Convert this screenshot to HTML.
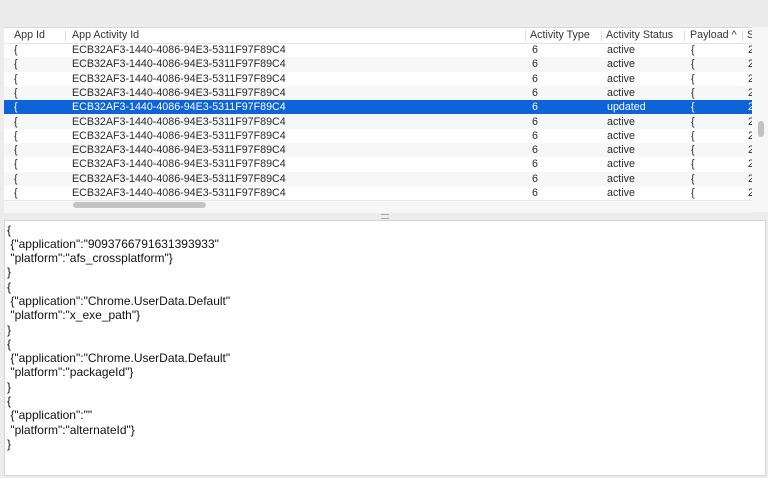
<!DOCTYPE html>
<html><head><style>
body{margin:0;width:768px;height:478px;background:#ececec;font-family:"Liberation Sans",sans-serif;overflow:hidden;position:relative}
.tbl{position:absolute;left:4px;top:27px;width:748px;height:185px;background:#fff;border-top:1px solid #d8d8d8;overflow:hidden}
.row{position:absolute;left:0;width:748px;height:14.3px;font-size:10.7px;color:#2a2a2a;line-height:14.3px}
.row.alt{background:#f6f7f7}
.row.sel{background:#0d63d8;color:#fff}
.row span{position:absolute;top:0;white-space:nowrap}
.hdr{top:0;height:15px;line-height:15px;color:#333;border-bottom:1px solid #e4e4e4}
.sep{position:absolute;top:2px;width:1px;height:11px;background:#ddd}
.vs{position:absolute;left:752px;top:27px;width:16px;height:185px;background:#f7f7f7}
.vthumb{position:absolute;left:758px;top:121px;width:6px;height:16px;border-radius:3px;background:#c2c2c2}
.hthumb{position:absolute;left:73px;top:202px;width:133px;height:6px;border-radius:3px;background:#c4c4c4}
.pane{position:absolute;left:4px;top:220px;width:762px;height:256px;background:#fff;border:1px solid #d6d6d6;box-sizing:border-box;font-size:12px;color:#111;line-height:14.3px;padding:1.5px 0 0 2px;white-space:pre}
.grip{position:absolute;left:381px;top:214px;width:8px;height:3px;border-top:1px solid #aaa;border-bottom:1px solid #aaa}
</style></head><body>
<div class="tbl">
<div class="row hdr"><span style="left:10px">App Id</span><span style="left:68px">App Activity Id</span><span style="left:526px">Activity Type</span><span style="left:602px">Activity Status</span><span style="left:686px">Payload ^</span><span style="left:743px">S</span>
<div class="sep" style="left:61px"></div><div class="sep" style="left:521px"></div><div class="sep" style="left:597px"></div><div class="sep" style="left:680px"></div><div class="sep" style="left:738px"></div></div>
<div class="row" style="top:15px"><span style="left:10px">{</span><span style="left:68px">ECB32AF3-1440-4086-94E3-5311F97F89C4</span><span style="left:528px">6</span><span style="left:603px">active</span><span style="left:687px">{</span><span style="left:744px">2</span></div>
<div class="row alt" style="top:29.3px"><span style="left:10px">{</span><span style="left:68px">ECB32AF3-1440-4086-94E3-5311F97F89C4</span><span style="left:528px">6</span><span style="left:603px">active</span><span style="left:687px">{</span><span style="left:744px">2</span></div>
<div class="row" style="top:43.6px"><span style="left:10px">{</span><span style="left:68px">ECB32AF3-1440-4086-94E3-5311F97F89C4</span><span style="left:528px">6</span><span style="left:603px">active</span><span style="left:687px">{</span><span style="left:744px">2</span></div>
<div class="row alt" style="top:57.9px"><span style="left:10px">{</span><span style="left:68px">ECB32AF3-1440-4086-94E3-5311F97F89C4</span><span style="left:528px">6</span><span style="left:603px">active</span><span style="left:687px">{</span><span style="left:744px">2</span></div>
<div class="row sel" style="top:72.2px"><span style="left:10px">{</span><span style="left:68px">ECB32AF3-1440-4086-94E3-5311F97F89C4</span><span style="left:528px">6</span><span style="left:603px">updated</span><span style="left:687px">{</span><span style="left:744px">2</span></div>
<div class="row alt" style="top:86.5px"><span style="left:10px">{</span><span style="left:68px">ECB32AF3-1440-4086-94E3-5311F97F89C4</span><span style="left:528px">6</span><span style="left:603px">active</span><span style="left:687px">{</span><span style="left:744px">2</span></div>
<div class="row" style="top:100.8px"><span style="left:10px">{</span><span style="left:68px">ECB32AF3-1440-4086-94E3-5311F97F89C4</span><span style="left:528px">6</span><span style="left:603px">active</span><span style="left:687px">{</span><span style="left:744px">2</span></div>
<div class="row alt" style="top:115.1px"><span style="left:10px">{</span><span style="left:68px">ECB32AF3-1440-4086-94E3-5311F97F89C4</span><span style="left:528px">6</span><span style="left:603px">active</span><span style="left:687px">{</span><span style="left:744px">2</span></div>
<div class="row" style="top:129.4px"><span style="left:10px">{</span><span style="left:68px">ECB32AF3-1440-4086-94E3-5311F97F89C4</span><span style="left:528px">6</span><span style="left:603px">active</span><span style="left:687px">{</span><span style="left:744px">2</span></div>
<div class="row alt" style="top:143.7px"><span style="left:10px">{</span><span style="left:68px">ECB32AF3-1440-4086-94E3-5311F97F89C4</span><span style="left:528px">6</span><span style="left:603px">active</span><span style="left:687px">{</span><span style="left:744px">2</span></div>
<div class="row" style="top:158px"><span style="left:10px">{</span><span style="left:68px">ECB32AF3-1440-4086-94E3-5311F97F89C4</span><span style="left:528px">6</span><span style="left:603px">active</span><span style="left:687px">{</span><span style="left:744px">2</span></div>
<div class="row alt" style="top:172.3px;border-top:1px solid #e6e6e6"></div>
</div>
<div class="vs"></div><div class="vthumb"></div><div class="hthumb"></div>
<div class="grip"></div>
<div class="pane">{
 {"application":"9093766791631393933"
 "platform":"afs_crossplatform"}
}
{
 {"application":"Chrome.UserData.Default"
 "platform":"x_exe_path"}
}
{
 {"application":"Chrome.UserData.Default"
 "platform":"packageId"}
}
{
 {"application":""
 "platform":"alternateId"}
}</div>
</body></html>
